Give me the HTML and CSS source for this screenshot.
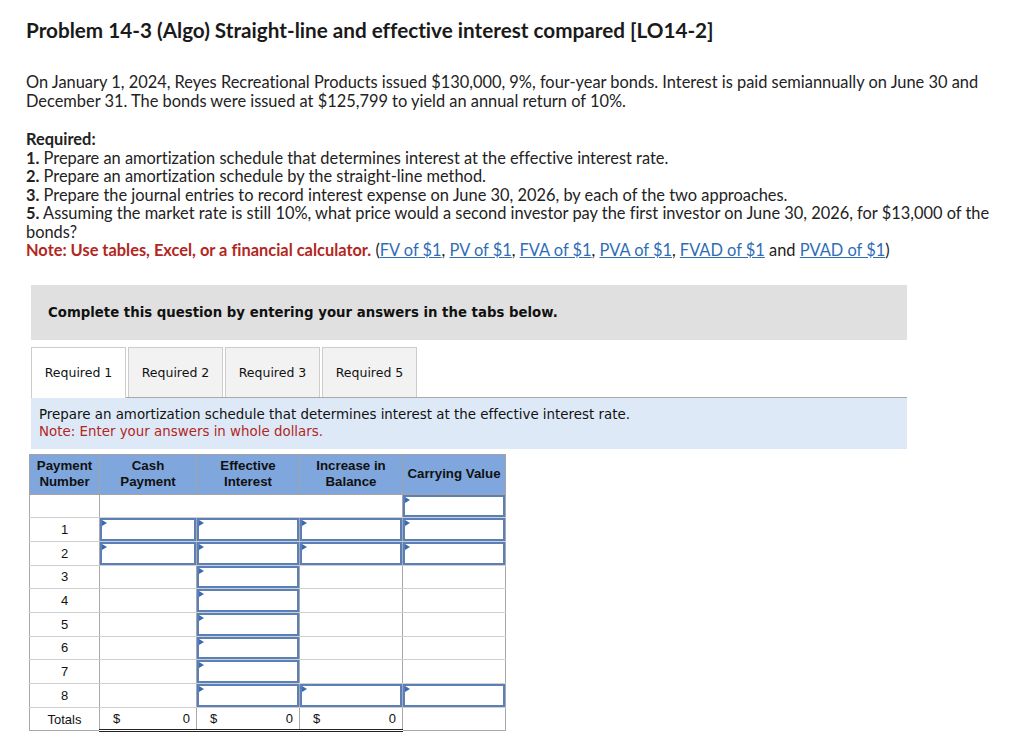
FILE: index.html
```html
<!DOCTYPE html>
<html>
<head>
<meta charset="utf-8">
<link rel="stylesheet" href="styles.css">
</head>
<body>
<div class="page">
  <h1 class="title">Problem 14-3 (Algo) Straight-line and effective interest compared [LO14-2]</h1>
  <p class="intro">On January 1, 2024, Reyes Recreational Products issued $130,000, 9%, four-year bonds. Interest is paid semiannually on June 30 and December 31. The bonds were issued at $125,799 to yield an annual return of 10%.</p>
  <div class="required">
    <div class="req-head">Required:</div>
    <div><b>1.</b> Prepare an amortization schedule that determines interest at the effective interest rate.</div>
    <div><b>2.</b> Prepare an amortization schedule by the straight-line method.</div>
    <div><b>3.</b> Prepare the journal entries to record interest expense on June 30, 2026, by each of the two approaches.</div>
    <div><b>5.</b> Assuming the market rate is still 10%, what price would a second investor pay the first investor on June 30, 2026, for $13,000 of the bonds?</div>
    <div><span class="note">Note: Use tables, Excel, or a financial calculator.</span> (<a href="#">FV of $1</a>, <a href="#">PV of $1</a>, <a href="#">FVA of $1</a>, <a href="#">PVA of $1</a>, <a href="#">FVAD of $1</a> and <a href="#">PVAD of $1</a>)</div>
  </div>

  <div class="complete">Complete this question by entering your answers in the tabs below.</div>

  <div class="tabs">
    <div class="tab active">Required 1</div>
    <div class="tab">Required 2</div>
    <div class="tab">Required 3</div>
    <div class="tab">Required 5</div>
  </div>
  <div class="instr">
    <div>Prepare an amortization schedule that determines interest at the effective interest rate.</div>
    <div class="instr-note">Note: Enter your answers in whole dollars.</div>
  </div>

  <table class="sched">
    <colgroup>
      <col class="c1"><col class="c2"><col class="c3"><col class="c4"><col class="c5">
    </colgroup>
    <thead>
      <tr>
        <th>Payment<br>Number</th>
        <th>Cash<br>Payment</th>
        <th>Effective<br>Interest</th>
        <th>Increase in<br>Balance</th>
        <th>Carrying Value</th>
      </tr>
    </thead>
    <tbody>
      <tr>
        <td></td>
        <td colspan="3"></td>
        <td class="in"><div class="box"></div></td>
      </tr>
      <tr>
        <td class="num">1</td>
        <td class="in"><div class="box"></div></td>
        <td class="in"><div class="box"></div></td>
        <td class="in"><div class="box"></div></td>
        <td class="in"><div class="box"></div></td>
      </tr>
      <tr>
        <td class="num">2</td>
        <td class="in"><div class="box"></div></td>
        <td class="in"><div class="box"></div></td>
        <td class="in"><div class="box"></div></td>
        <td class="in"><div class="box"></div></td>
      </tr>
      <tr>
        <td class="num">3</td>
        <td></td>
        <td class="in"><div class="box"></div></td>
        <td></td>
        <td></td>
      </tr>
      <tr>
        <td class="num">4</td>
        <td></td>
        <td class="in"><div class="box"></div></td>
        <td></td>
        <td></td>
      </tr>
      <tr>
        <td class="num">5</td>
        <td></td>
        <td class="in"><div class="box"></div></td>
        <td></td>
        <td></td>
      </tr>
      <tr>
        <td class="num">6</td>
        <td></td>
        <td class="in"><div class="box"></div></td>
        <td></td>
        <td></td>
      </tr>
      <tr>
        <td class="num">7</td>
        <td></td>
        <td class="in"><div class="box"></div></td>
        <td></td>
        <td></td>
      </tr>
      <tr>
        <td class="num">8</td>
        <td></td>
        <td class="in"><div class="box"></div></td>
        <td class="in"><div class="box"></div></td>
        <td class="in"><div class="box"></div></td>
      </tr>
      <tr class="totals">
        <td class="num">Totals</td>
        <td class="tot"><span>$</span><span>0</span></td>
        <td class="tot"><span>$</span><span>0</span></td>
        <td class="tot"><span>$</span><span>0</span></td>
        <td></td>
      </tr>
    </tbody>
  </table>
</div>
</body>
</html>
```

FILE: styles.css
```css
html, body {
  margin: 0;
  padding: 0;
  background: #ffffff;
}

.page {
  padding: 17px 0 0 26px;
  width: 970px;
  font-family: "Lato", "Open Sans", sans-serif;
  font-variant-ligatures: none;
  color: #222;
}

.title {
  margin: 0;
  font-size: 20.7px;
  line-height: 26px;
  font-weight: 700;
  color: #1a1a1a;
}

.intro {
  margin: 30px 0 0 0;
  font-size: 16.4px;
  line-height: 18.5px;
}

.required {
  margin-top: 20px;
  font-size: 16.4px;
  line-height: 18.5px;
}

.required b {
  display: inline-block;
  line-height: 18.5px;
  height: 18.5px;
}

.req-head {
  font-weight: 700;
}

.note {
  color: #b3261e;
  font-weight: 700;
}

.required a {
  color: #2f6db5;
  text-decoration: underline;
}

.complete {
  margin: 25px 0 0 5px;
  width: 876px;
  height: 55px;
  box-sizing: border-box;
  background: #e0e0e0;
  padding: 0 17px;
  display: flex;
  align-items: center;
  font-family: "DejaVu Sans", Verdana, sans-serif;
  font-weight: 700;
  font-size: 13.3px;
  color: #111;
}

.tabs {
  margin: 7px 0 0 5px;
  display: flex;
  gap: 2px;
  height: 50px;
}

.tab {
  width: 95px;
  box-sizing: border-box;
  border: 1px solid #cccccc;
  border-bottom: none;
  background: #f2f2f2;
  display: flex;
  align-items: center;
  justify-content: center;
  font-family: "DejaVu Sans", Verdana, sans-serif;
  font-size: 12.5px;
  color: #111;
}

.tab.active {
  background: #ffffff;
  position: relative;
  z-index: 1;
  height: 51px;
}

.instr {
  margin-left: 5px;
  width: 876px;
  box-sizing: border-box;
  background: #dde9f7;
  border-top: 1px solid #aaaaaa;
  padding: 8px 8px 9px;
  font-family: "DejaVu Sans", Verdana, sans-serif;
  font-size: 13.4px;
  line-height: 17px;
  color: #111;
}

.instr-note {
  color: #b3261e;
}

.sched {
  margin: 5px 0 0 3px;
  border-collapse: collapse;
  table-layout: fixed;
  width: 476px;
  font-family: "Liberation Sans", Arial, sans-serif;
  font-size: 13px;
  color: #111;
}

.c1 { width: 70px; }
.c2 { width: 97px; }
.c3 { width: 103px; }
.c4 { width: 103px; }
.c5 { width: 103px; }

.sched th {
  background: #7fa7dd;
  border: 1px solid #a3a3a3;
  font-weight: 700;
  font-size: 13.3px;
  line-height: 16px;
  height: 39px;
  padding: 0;
  color: #111;
}

.sched td {
  border: 1px solid #a8a8a8;
  border-top: 1px solid #cfcfcf;
  border-bottom: 1px solid #cfcfcf;
  height: 23.7px;
  padding: 0;
  box-sizing: border-box;
}

.sched td.num {
  text-align: center;
}

.sched td.in {
  padding: 0;
  position: relative;
}

.box {
  position: absolute;
  inset: 0;
  border: 2px solid #5b80b9;
  background: #fff;
}

.box::before {
  content: "";
  position: absolute;
  top: 0;
  left: 0;
  width: 0;
  height: 0;
  border-top: 3.5px solid transparent;
  border-bottom: 3.5px solid transparent;
  border-left: 5px solid #3a6bb5;
}

.totals td {
  border-bottom: 1px solid #a8a8a8;
}

.sched td.tot {
  padding: 0 6px 0 13px;
  border-bottom: 3px double #222;
  white-space: nowrap;
}

.tot span:first-child {
  float: left;
}

.tot span:last-child {
  float: right;
}
```
